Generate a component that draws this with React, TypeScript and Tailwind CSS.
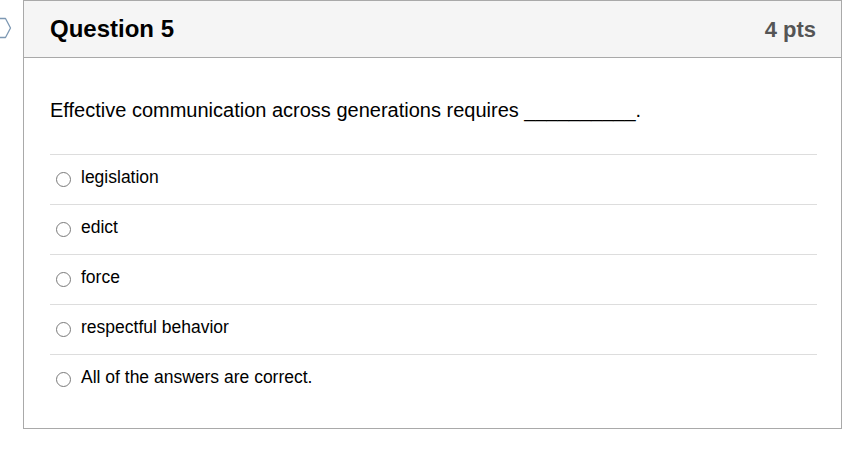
const answers = [
  'legislation',
  'edict',
  'force',
  'respectful behavior',
  'All of the answers are correct.',
];

const App = () => {
  return (
    <div className="flex bg-white min-h-[452px] font-['Liberation_Sans',Arial,sans-serif] text-black">
      <div className="w-[23px] shrink-0 pt-[17px]">
        <svg width="12" height="22" viewBox="0 0 12 22" fill="none">
          <path d="M-2 1.5 H5.5 L10.5 11 L5.5 20.5 H-2" stroke="#7d98b3" strokeWidth="1.3" strokeLinejoin="round" />
        </svg>
      </div>

      <div className="w-[819px] h-[429px] border border-[#a9a9a9] flex flex-col">
        <div className="h-[57px] shrink-0 bg-[#f5f5f5] border-b border-[#a9a9a9] flex items-center justify-between pl-[26px] pr-[25px]">
          <h2 className="text-[24px] font-bold">Question 5</h2>
          <span className="text-[22px] font-bold text-[#555555]">4 pts</span>
        </div>

        <div className="pl-[26px] pr-[24px] pt-[37px]">
          <p className="text-[20px] leading-[30px] mb-[29px]">
            Effective communication across generations requires __________.
          </p>

          <div>
            {answers.map((answer) => (
              <label
                key={answer}
                className="h-[50px] border-t border-[#dddddd] flex items-center pl-[6px] gap-[10px] text-[17.5px]"
              >
                <span className="w-[15px] h-[15px] rounded-full border-[1.5px] border-[#7a7a7a] bg-white shrink-0" />
                <span className="pb-[5px]">{answer}</span>
              </label>
            ))}
          </div>
        </div>
      </div>
    </div>
  );
};

export default App;
